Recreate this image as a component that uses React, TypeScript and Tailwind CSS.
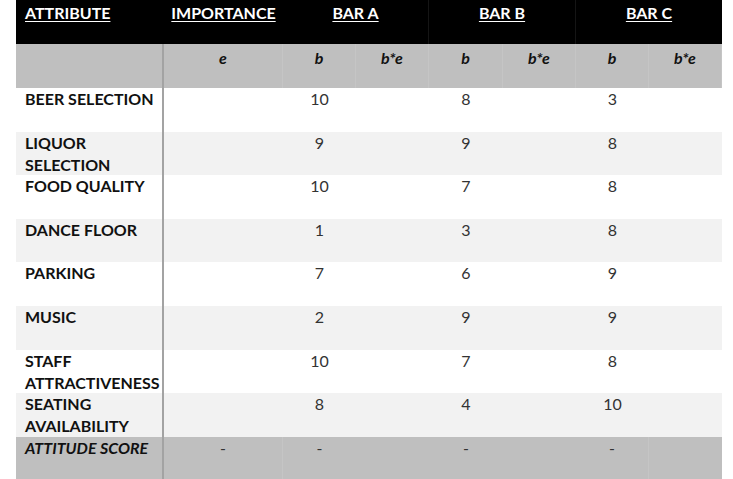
import { FC } from "react";

type Row = { label: string; a: string; b: string; c: string };

const rows: Row[] = [
    { label: "BEER SELECTION", a: "10", b: "8", c: "3" },
    { label: "LIQUOR SELECTION", a: "9", b: "9", c: "8" },
    { label: "FOOD QUALITY", a: "10", b: "7", c: "8" },
    { label: "DANCE FLOOR", a: "1", b: "3", c: "8" },
    { label: "PARKING", a: "7", b: "6", c: "9" },
    { label: "MUSIC", a: "2", b: "9", c: "9" },
    { label: "STAFF ATTRACTIVENESS", a: "10", b: "7", c: "8" },
    { label: "SEATING AVAILABILITY", a: "8", b: "4", c: "10" },
];

const grid = "grid w-[706px] grid-cols-[148px_119px_73px_73px_74px_73px_73px_73px]";

const App: FC = () => {
    return (
        <div className="w-[733px] h-[479px] bg-white pl-4 overflow-hidden font-['Lato',sans-serif] text-[16px] leading-[22px]">
            {/* black title row */}
            <div className={`${grid} h-[44px] bg-black text-white font-bold`}>
                <div className="pl-[9px] pt-[2px]"><span className="underline underline-offset-2">ATTRIBUTE</span></div>
                <div className="text-center pt-[2px]"><span className="underline underline-offset-2">IMPORTANCE</span></div>
                <div className="col-span-2 text-center pt-[2px] border-r border-[#151515]"><span className="underline underline-offset-2">BAR A</span></div>
                <div className="col-span-2 text-center pt-[2px] border-r border-[#151515]"><span className="underline underline-offset-2">BAR B</span></div>
                <div className="col-span-2 text-center pt-[2px]"><span className="underline underline-offset-2">BAR C</span></div>
            </div>

            {/* gray sub header */}
            <div className={`${grid} h-[44px] bg-[#bfbfbf] text-[#111] font-bold italic`}>
                <div className="border-r-2 border-[#a3a3a3]"></div>
                {["e", "b", "b*e", "b", "b*e", "b", "b*e"].map((t, i) => (
                    <div key={i} className="text-center pt-[3px] border-r border-[#c5c5c5]">{t}</div>
                ))}
            </div>

            {rows.map((r, i) => (
                <div key={r.label} className={`${grid} h-[43.6px] ${i % 2 === 1 ? "bg-[#f2f2f2]" : "bg-white"}`}>
                    <div className="pl-[9px] pr-2 font-bold text-[#111] border-r-2 border-[#a3a3a3]">{r.label}</div>
                    <div></div>
                    <div className="text-center text-[#333]">{r.a}</div>
                    <div></div>
                    <div className="text-center text-[#333]">{r.b}</div>
                    <div></div>
                    <div className="text-center text-[#333]">{r.c}</div>
                    <div></div>
                </div>
            ))}

            {/* score row */}
            <div className={`${grid} h-[44px] bg-[#bfbfbf]`}>
                <div className="pl-[9px] font-bold italic text-[#111] border-r-2 border-[#a3a3a3]">ATTITUDE SCORE</div>
                <div className="text-center text-[#333] border-r border-[#c5c5c5]">-</div>
                <div className="text-center text-[#333]">-</div>
                <div></div>
                <div className="text-center text-[#333]">-</div>
                <div></div>
                <div className="text-center text-[#333] border-r border-[#c5c5c5]">-</div>
                <div></div>
            </div>
        </div>
    );
};

export default App;
